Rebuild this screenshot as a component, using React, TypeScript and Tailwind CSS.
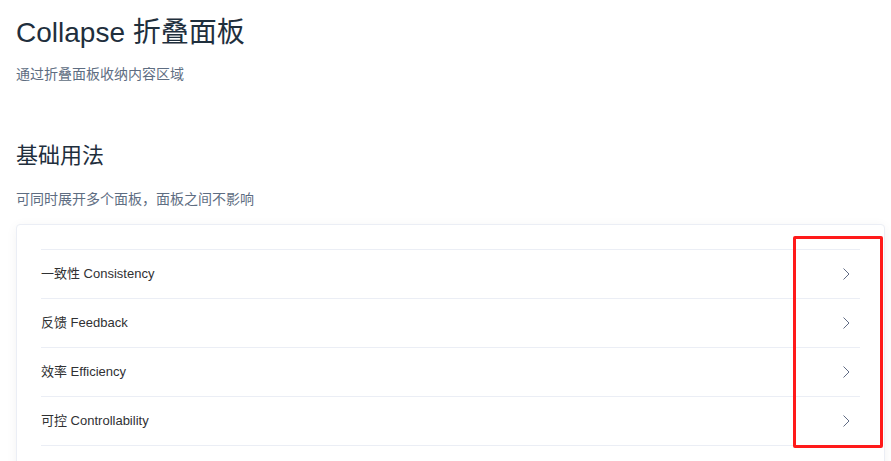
const items = [
  "一致性 Consistency",
  "反馈 Feedback",
  "效率 Efficiency",
  "可控 Controllability",
];

function ArrowRight() {
  return (
    <svg width="12" height="12" viewBox="0 0 12 12" fill="none" className="shrink-0">
      <polyline
        points="3.5,0.5 9,6 3.5,11.5"
        stroke="#606b84"
        strokeWidth="1"
        strokeLinejoin="round"
      />
    </svg>
  );
}

export default function App() {
  return (
    <div
      className="relative min-h-[461px] bg-white pl-4 pr-[6px]"
      style={{ fontFamily: '"Liberation Sans", "Noto Sans CJK SC", sans-serif' }}
    >
      <h1 className="pt-3 text-[28px] leading-[42px] font-normal text-[#1f2f3d]">
        Collapse 折叠面板
      </h1>
      <p className="mt-[9px] text-sm leading-[22px] text-[#5e6d82]">
        通过折叠面板收纳内容区域
      </p>

      <h2 className="mt-[54px] text-[22px] leading-[33px] font-normal text-[#1f2f3d]">
        基础用法
      </h2>
      <p className="mt-[16px] text-sm leading-[22px] text-[#5e6d82]">
        可同时展开多个面板，面板之间不影响
      </p>

      <div className="mt-[14px] rounded border border-[#ebeef5] bg-white px-6 pt-6 pb-6 shadow-[0_2px_12px_0_rgba(0,0,0,0.05)]">
        <div className="border-t border-[#ebeef5]">
          {items.map((title) => (
            <div
              key={title}
              className="flex h-[49px] items-center justify-between border-b border-[#ebeef5] text-[13px] text-[#303133]"
            >
              <span>{title}</span>
              <span className="mr-[8px]">
                <ArrowRight />
              </span>
            </div>
          ))}
        </div>
      </div>

      <div className="pointer-events-none absolute left-[793px] top-[236px] h-[212px] w-[90px] rounded-[2px] border-[3px] border-[#ff1a1a]" />
    </div>
  );
}
